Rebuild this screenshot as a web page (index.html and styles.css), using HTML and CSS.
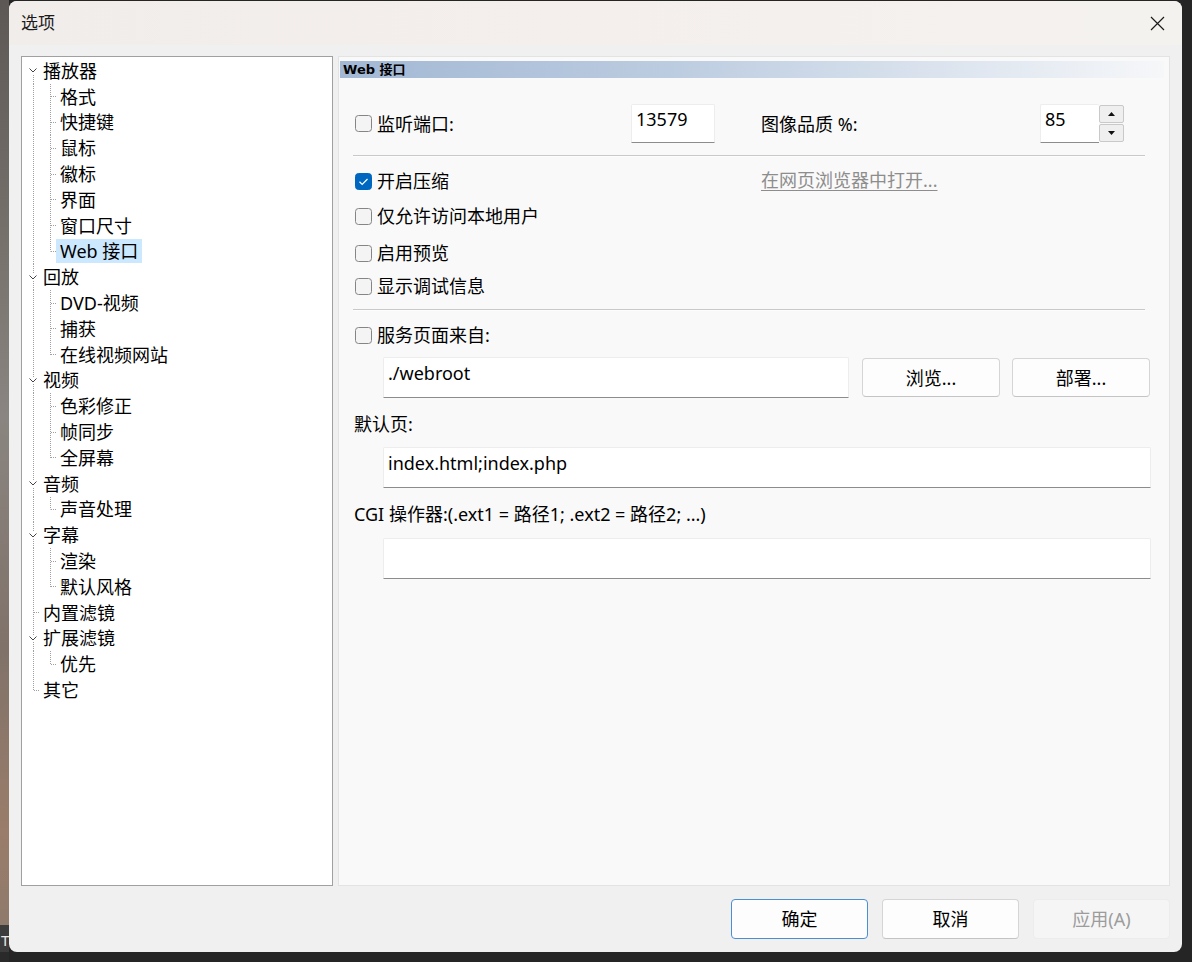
FILE: index.html
```html
<!DOCTYPE html>
<html lang="zh-CN">
<head>
<meta charset="utf-8">
<title>选项</title>
<link rel="stylesheet" href="styles.css">
</head>
<body>
<div class="desk-left">
  <div class="desk-photo"></div>
  <div class="desk-task">T</div>
</div>
<div class="dialog">
  <header class="titlebar">
    <span class="title">选项</span>
    <svg class="close" width="15" height="15" viewBox="0 0 15 15"><path d="M1 1L14 14M14 1L1 14" stroke="#1b1b1b" stroke-width="1.2" fill="none"/></svg>
  </header>
  <div class="main">
    <nav class="tree">
      <div class="tr root open first"><svg class="tw" width="8" height="5" viewBox="0 0 8 5"><polyline points="0.5,0.5 4,4 7.5,0.5" fill="none" stroke="#444" stroke-width="1"/></svg><span class="lb">播放器</span></div>
      <div class="tr child"><span class="lb">格式</span></div>
      <div class="tr child"><span class="lb">快捷键</span></div>
      <div class="tr child"><span class="lb">鼠标</span></div>
      <div class="tr child"><span class="lb">徽标</span></div>
      <div class="tr child"><span class="lb">界面</span></div>
      <div class="tr child"><span class="lb">窗口尺寸</span></div>
      <div class="tr child last"><span class="lb sel">Web 接口</span></div>
      <div class="tr root open"><svg class="tw" width="8" height="5" viewBox="0 0 8 5"><polyline points="0.5,0.5 4,4 7.5,0.5" fill="none" stroke="#444" stroke-width="1"/></svg><span class="lb">回放</span></div>
      <div class="tr child"><span class="lb">DVD-视频</span></div>
      <div class="tr child"><span class="lb">捕获</span></div>
      <div class="tr child last"><span class="lb">在线视频网站</span></div>
      <div class="tr root open"><svg class="tw" width="8" height="5" viewBox="0 0 8 5"><polyline points="0.5,0.5 4,4 7.5,0.5" fill="none" stroke="#444" stroke-width="1"/></svg><span class="lb">视频</span></div>
      <div class="tr child"><span class="lb">色彩修正</span></div>
      <div class="tr child"><span class="lb">帧同步</span></div>
      <div class="tr child last"><span class="lb">全屏幕</span></div>
      <div class="tr root open"><svg class="tw" width="8" height="5" viewBox="0 0 8 5"><polyline points="0.5,0.5 4,4 7.5,0.5" fill="none" stroke="#444" stroke-width="1"/></svg><span class="lb">音频</span></div>
      <div class="tr child last"><span class="lb">声音处理</span></div>
      <div class="tr root open"><svg class="tw" width="8" height="5" viewBox="0 0 8 5"><polyline points="0.5,0.5 4,4 7.5,0.5" fill="none" stroke="#444" stroke-width="1"/></svg><span class="lb">字幕</span></div>
      <div class="tr child"><span class="lb">渲染</span></div>
      <div class="tr child last"><span class="lb">默认风格</span></div>
      <div class="tr root leaf"><span class="tw-space"></span><span class="lb">内置滤镜</span></div>
      <div class="tr root open"><svg class="tw" width="8" height="5" viewBox="0 0 8 5"><polyline points="0.5,0.5 4,4 7.5,0.5" fill="none" stroke="#444" stroke-width="1"/></svg><span class="lb">扩展滤镜</span></div>
      <div class="tr child last"><span class="lb">优先</span></div>
      <div class="tr root leaf end"><span class="tw-space"></span><span class="lb">其它</span></div>
    </nav>
    <section class="panel">
      <div class="pane-head">Web 接口</div>
      <div class="pane-body">
        <div class="row-top">
          <label class="chk-cell w-port"><span class="cb"></span><span>监听端口:</span></label>
          <div class="edit port">13579</div>
          <div class="lbl-cell">图像品质 %:</div>
          <div class="spin">
            <div class="edit num">85</div>
            <div class="spin-btns">
              <span class="sb"><svg width="7" height="4" viewBox="0 0 7 4"><polygon points="3.5,0 7,4 0,4" fill="#111"/></svg></span>
              <span class="sb"><svg width="7" height="4" viewBox="0 0 7 4"><polygon points="0,0 7,0 3.5,4" fill="#111"/></svg></span>
            </div>
          </div>
        </div>
        <div class="sep mt12"></div>
        <div class="crow mt11">
          <label class="chk-cell w-link"><span class="cb on"><svg width="17" height="17" viewBox="0 0 17 17"><polyline points="4.5,8.8 7.2,11.4 12.5,6" fill="none" stroke="#fff" stroke-width="1.2"/></svg></span><span>开启压缩</span></label>
          <span class="link">在网页浏览器中打开...</span>
        </div>
        <div class="crow mt9"><label class="chk-cell"><span class="cb"></span><span>仅允许访问本地用户</span></label></div>
        <div class="crow mt11"><label class="chk-cell"><span class="cb"></span><span>启用预览</span></label></div>
        <div class="crow mt7"><label class="chk-cell"><span class="cb"></span><span>显示调试信息</span></label></div>
        <div class="sep mt10"></div>
        <div class="crow mt11"><label class="chk-cell"><span class="cb"></span><span>服务页面来自:</span></label></div>
        <div class="path-row mt9">
          <div class="edit path">./webroot</div>
          <button class="btn">浏览...</button>
          <button class="btn">部署...</button>
        </div>
        <div class="plabel mt13">默认页:</div>
        <div class="edit wide mt10">index.html;index.php</div>
        <div class="plabel mt13">CGI 操作器:(.ext1 = 路径1; .ext2 = 路径2; ...)</div>
        <div class="edit wide mt11"></div>
      </div>
    </section>
  </div>
  <footer class="footer">
    <button class="btn fbtn default">确定</button>
    <button class="btn fbtn">取消</button>
    <button class="btn fbtn disabled">应用(A)</button>
  </footer>
</div>
</body>
</html>
```

FILE: styles.css
```css
* { box-sizing: border-box; }
html, body { margin: 0; height: 100%; }
body {
  background: #252525;
  font-family: "Noto Sans", "Noto Sans CJK SC", sans-serif;
  font-size: 18px;
  color: #000;
  display: flex;
  align-items: flex-start;
  overflow: hidden;
}
.desk-left {
  width: 9px;
  height: 962px;
  display: flex;
  flex-direction: column;
  flex: none;
}
.desk-photo {
  flex: 1;
  background: linear-gradient(to bottom, #5d5855 0%, #76706b 25%, #8a8580 45%, #807269 70%, #9a7d6a 90%, #8f7a6b 100%);
}
.desk-task {
  height: 37px;
  background: #3c3c3c;
  color: #e8e8e8;
  font-size: 15px;
  line-height: 30px;
  padding-left: 1px;
  overflow: hidden;
  border-bottom: 10px solid #2a2a2a;
}
.dialog {
  margin-top: 1px;
  width: 1173px;
  height: 951px;
  flex: none;
  background: #f0f0f0;
  border-radius: 8px;
  display: flex;
  flex-direction: column;
  overflow: hidden;
}
.titlebar {
  height: 44px;
  flex: none;
  display: flex;
  align-items: center;
  justify-content: space-between;
  padding: 0 17px 0 12px;
  background: linear-gradient(to right, #f1edea 0%, #f4efec 50%, #f4f2ef 100%);
}
.title { font-size: 17px; color: #1b1b1b; line-height: 24px; }
.close { display: block; }

.main {
  flex: 1;
  display: flex;
  gap: 5px;
  padding: 11px 12px 0 12px;
}
.tree {
  width: 312px;
  height: 830px;
  background: #fff;
  border: 1px solid #a0a0a0;
  padding-top: 1px;
  --dv: repeating-linear-gradient(to bottom, #a0a0a0 0 1px, transparent 1px 2px);
  --dh: repeating-linear-gradient(to right, #a0a0a0 0 1px, transparent 1px 2px);
}
.tr {
  height: 25.8px;
  display: flex;
  align-items: center;
  white-space: nowrap;
}
.tr.root { padding-left: 7px; }
.tr.child { padding-left: 34px; }
.tw { display: block; width: 8px; height: 5px; margin-right: 2px; flex: none; }
.tw-space { display: block; width: 8px; margin-right: 2px; flex: none; }
.lb {
  display: block;
  height: 24px;
  line-height: 24px;
  padding: 0 4px;
}
.lb.sel { background: #cce8ff; }

.tr.open {
  background:
    var(--dv) 11px 0 / 1px 9px no-repeat,
    var(--dv) 11px 100% / 1px 9px no-repeat;
}
.tr.open.first {
  background: var(--dv) 11px 100% / 1px 9px no-repeat;
}
.tr.leaf {
  background:
    var(--dv) 11px 0 / 1px 100% no-repeat,
    var(--dh) 12px 50% / 6px 1px no-repeat;
}
.tr.leaf.end {
  background:
    var(--dv) 11px 0 / 1px 50% no-repeat,
    var(--dh) 12px 50% / 6px 1px no-repeat;
}
.tr.child {
  background:
    var(--dv) 11px 0 / 1px 100% no-repeat,
    var(--dv) 28px 0 / 1px 100% no-repeat,
    var(--dh) 29px 50% / 6px 1px no-repeat;
}
.tr.child.last {
  background:
    var(--dv) 11px 0 / 1px 100% no-repeat,
    var(--dv) 28px 0 / 1px 50% no-repeat,
    var(--dh) 29px 50% / 6px 1px no-repeat;
}

.panel {
  width: 832px;
  height: 830px;
  background: #f9f9f9;
  border: 1px solid #e3e3e3;
  padding: 4px 5px 0 1px;
}
.pane-head {
  height: 17px;
  line-height: 17px;
  font-family: "DejaVu Sans", "Noto Sans CJK SC", sans-serif;
  font-size: 13px;
  font-weight: bold;
  padding-left: 3px;
  color: #000;
  background: linear-gradient(to right, #a2b8d4 0%, #bccce0 40%, #dde5ef 75%, #f6f7f9 100%);
}
.pane-body { padding-left: 15px; }

.mt7 { margin-top: 7px; }
.mt9 { margin-top: 9px; }
.mt10 { margin-top: 10px; }
.mt11 { margin-top: 11px; }
.mt12 { margin-top: 12px; }
.mt13 { margin-top: 13px; }

.row-top {
  margin-top: 26px;
  height: 39px;
  display: flex;
  align-items: center;
}
.chk-cell {
  display: flex;
  align-items: center;
  gap: 5px;
  height: 26px;
  line-height: 24px;
  white-space: nowrap;
}
.w-port { width: 276px; }
.w-link { width: 406px; }
.cb {
  width: 17px;
  height: 17px;
  border: 1px solid #858585;
  border-radius: 3.5px;
  background: #f4f4f4;
  flex: none;
  display: block;
}
.cb.on { background: #0067c0; border-color: #0067c0; }
.cb.on svg { display: block; margin: -1px; }

.edit {
  background: #fff;
  border: 1px solid #ededed;
  border-bottom: 1px solid #8c8c8c;
  border-radius: 2px 2px 0 0;
  height: 41px;
  line-height: 24px;
  padding: 3px 4px 0;
  white-space: nowrap;
}
.port { width: 84px; height: 39px; padding-top: 2px; }
.lbl-cell { width: 279px; margin-left: 46px; line-height: 24px; }
.spin { display: flex; height: 39px; }
.num { width: 59px; height: 39px; padding-top: 2px; border-right: none; }
.spin-btns {
  width: 25px;
  display: flex;
  flex-direction: column;
  gap: 1px;
  padding: 1px 0;
}
.sb {
  flex: 1;
  background: #efefef;
  border: 1px solid #c9c9c9;
  border-radius: 2px;
  display: flex;
  align-items: center;
  justify-content: center;
}
.sb svg { display: block; }

.sep {
  width: 792px;
  margin-left: -2px;
  height: 2px;
  border-top: 1px solid #c9c9c9;
  border-bottom: 1px solid #fdfdfd;
}
.crow {
  display: flex;
  align-items: center;
  height: 26px;
}
.link {
  color: #8d8d8d;
  text-decoration: underline;
  text-underline-offset: 3px;
  line-height: 24px;
  padding-bottom: 3px;
}

.path-row {
  display: flex;
  align-items: center;
  margin-left: 28px;
  height: 41px;
}
.path { width: 466px; }
.btn {
  font-family: inherit;
  font-size: 18px;
  color: #000;
  background: #fdfdfd;
  border: 1px solid #d5d5d5;
  border-bottom-color: #c4c4c4;
  border-radius: 4px;
  height: 39px;
  width: 138px;
  padding: 0;
  line-height: 24px;
}
.path-row .btn { margin-left: 13px; }
.path-row .btn + .btn { margin-left: 12px; }
.plabel { height: 26px; line-height: 26px; margin-left: -1px; white-space: nowrap; }
.wide { width: 768px; margin-left: 28px; }

.footer {
  flex: none;
  display: flex;
  justify-content: flex-end;
  gap: 14px;
  padding: 13px 12px;
}
.fbtn { width: 137px; height: 40px; }
.fbtn.default { border: 1px solid #4b8fd3; background: #fdfdfd; }
.fbtn.disabled { color: #9c9c9c; background: #f5f5f5; border-color: #ececec; }
```
